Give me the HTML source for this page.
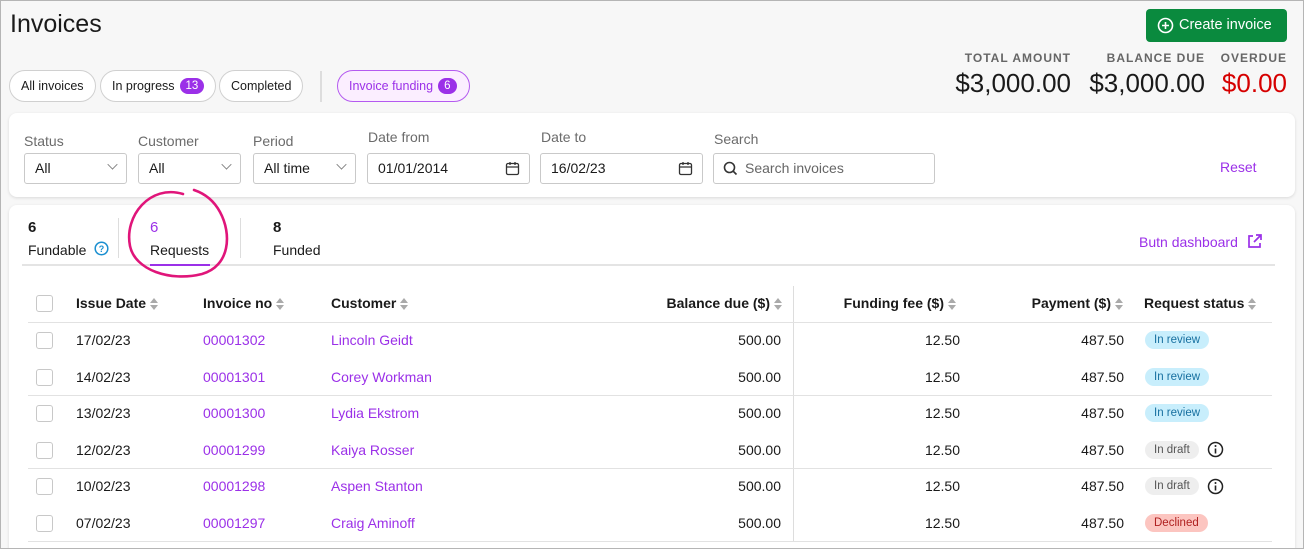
<!DOCTYPE html>
<html><head><meta charset="utf-8"><style>
*{box-sizing:border-box;margin:0;padding:0}
html{width:1304px;height:549px;overflow:hidden}
body{width:1304px;height:549px;overflow:hidden;background:#f7f7f7;font-family:"Liberation Sans",sans-serif;color:#1a1a1a;position:relative}
.frame{position:absolute;left:0;top:0;width:1304px;height:549px;border:1px solid #b5b5b5;pointer-events:none;z-index:9}
.a{position:absolute;white-space:nowrap}
.pill{position:absolute;top:70px;height:32px;border:1px solid #d0d0d0;border-radius:16px;background:#fff;font-size:12.5px;line-height:30px;padding:0 11px}
.badge{display:inline-block;background:#9b30e8;color:#fff;border-radius:9px;font-size:11.5px;line-height:16px;padding:0 6px;margin-left:5px;vertical-align:1px}
.card{position:absolute;left:9px;width:1286px;background:#fff;border-radius:8px;box-shadow:0 1px 3px rgba(0,0,0,.12)}
.lbl{font-size:14px;color:#6b6b6b}
.sel{position:absolute;top:153px;height:31px;border:1px solid #c9c9c9;border-radius:3px;background:#fff;font-size:14px;line-height:29px;padding-left:10px}
.chev{position:absolute;right:9px;width:9px;height:9px;border-right:1.5px solid #777;border-bottom:1.5px solid #777;transform:rotate(45deg) scale(.8);top:6px}
.th{font-weight:bold;font-size:14px;top:295px}
.sort{display:inline-block;width:8px;vertical-align:-2px;margin-left:4px}
.cb{position:absolute;left:36px;width:17px;height:17px;border:1px solid #c8c8c8;border-radius:3px;background:#fff}
.pur{color:#9b30e8}
.td{font-size:14px}
.st{position:absolute;left:1145px;height:18px;border-radius:9px;font-size:11.5px;line-height:18px;padding:0 9px}
.rev{background:#c8eefc;color:#1770a0}
.dr{background:#eee;color:#555}
.de{background:#fcc5c0;color:#b02020}
.hr{position:absolute;left:28px;width:1244px;height:1px;background:#e2e2e2}
</style></head><body>
<div class="frame"></div>
<div class="a" style="left:10px;top:10px;font-size:25px">Invoices</div>
<div class="a" style="left:1146px;top:9px;width:141px;height:33px;background:#0a8a3e;border-radius:4px;color:#fff;font-size:14.5px;line-height:33px;padding-left:33px">Create invoice
<svg style="position:absolute;left:11px;top:8px" width="17" height="17" viewBox="0 0 17 17"><circle cx="8.5" cy="8.5" r="7" fill="none" stroke="#fff" stroke-width="1.6"/><path d="M8.5 5v7M5 8.5h7" stroke="#fff" stroke-width="1.6"/></svg></div>
<div class="a" style="right:233px;top:51px;font-size:12px;letter-spacing:1px;color:#666;font-weight:bold">TOTAL AMOUNT</div>
<div class="a" style="right:99px;top:51px;font-size:12px;letter-spacing:1px;color:#666;font-weight:bold">BALANCE DUE</div>
<div class="a" style="right:17px;top:51px;font-size:12px;letter-spacing:1px;color:#666;font-weight:bold">OVERDUE</div>
<div class="a" style="right:233px;top:68px;font-size:26px">$3,000.00</div>
<div class="a" style="right:99px;top:68px;font-size:26px">$3,000.00</div>
<div class="a" style="right:17px;top:68px;font-size:26px;color:#d60000">$0.00</div>
<div class="pill" style="left:9px">All invoices</div>
<div class="pill" style="left:100px">In progress<span class="badge">13</span></div>
<div class="pill" style="left:219px">Completed</div>
<div class="a" style="left:320px;top:71px;width:2px;height:31px;background:#ddd"></div>
<div class="pill" style="left:337px;width:133px;background:#fbeeff;border-color:#b45af0;color:#9b30e8">Invoice funding<span class="badge">6</span></div>

<div class="card" style="top:113px;height:84px"></div>
<div class="a lbl" style="left:24px;top:133px">Status</div>
<div class="a lbl" style="left:138px;top:133px">Customer</div>
<div class="a lbl" style="left:253px;top:133px">Period</div>
<div class="a lbl" style="left:368px;top:129px">Date from</div>
<div class="a lbl" style="left:541px;top:129px">Date to</div>
<div class="a lbl" style="left:714px;top:131px">Search</div>
<div class="sel" style="left:24px;width:103px">All<i class="chev"></i></div>
<div class="sel" style="left:138px;width:103px">All<i class="chev"></i></div>
<div class="sel" style="left:253px;width:103px">All time<i class="chev"></i></div>
<div class="sel" style="left:367px;width:163px">01/01/2014<svg style="position:absolute;right:9px;top:7px" width="15" height="15" viewBox="0 0 15 15"><rect x="1.5" y="2.5" width="12" height="11" rx="1.5" fill="none" stroke="#333" stroke-width="1.3"/><path d="M1.5 6h12M5 1v3M10 1v3" stroke="#333" stroke-width="1.3"/></svg></div>
<div class="sel" style="left:540px;width:163px">16/02/23<svg style="position:absolute;right:9px;top:7px" width="15" height="15" viewBox="0 0 15 15"><rect x="1.5" y="2.5" width="12" height="11" rx="1.5" fill="none" stroke="#333" stroke-width="1.3"/><path d="M1.5 6h12M5 1v3M10 1v3" stroke="#333" stroke-width="1.3"/></svg></div>
<div class="sel" style="left:713px;width:222px;padding-left:31px;color:#666">Search invoices<svg style="position:absolute;left:9px;top:7px" width="15" height="15" viewBox="0 0 15 15"><circle cx="6.5" cy="6.5" r="5" fill="none" stroke="#333" stroke-width="1.6"/><path d="M10 10l3.5 3.5" stroke="#333" stroke-width="1.6"/></svg></div>
<div class="a pur" style="left:1220px;top:159px;font-size:14px">Reset</div>

<div class="card" style="top:205px;height:350px"></div>
<div class="a" style="left:28px;top:219px;font-size:15px;font-weight:bold">6</div>
<div class="a" style="left:28px;top:242px;font-size:14px">Fundable</div>
<svg class="a" style="left:94px;top:241px" width="15" height="15" viewBox="0 0 15 15"><circle cx="7.5" cy="7.5" r="6.3" fill="none" stroke="#1a8fd0" stroke-width="1.5"/><text x="7.5" y="11" font-size="9" font-weight="bold" text-anchor="middle" fill="#1a8fd0" font-family="Liberation Sans">?</text></svg>
<div class="a" style="left:118px;top:218px;width:1px;height:40px;background:#ddd"></div>
<div class="a pur" style="left:150px;top:219px;font-size:15px">6</div>
<div class="a" style="left:150px;top:242px;font-size:14px">Requests</div>
<div class="a" style="left:240px;top:218px;width:1px;height:40px;background:#ddd"></div>
<div class="a" style="left:273px;top:219px;font-size:15px;font-weight:bold">8</div>
<div class="a" style="left:273px;top:242px;font-size:14px">Funded</div>
<div class="a" style="left:22px;top:264px;width:1253px;height:2px;background:#e4e4e4"></div>
<div class="a" style="left:150px;top:264px;width:60px;height:2px;background:#9b30e8"></div>
<svg class="a" style="left:120px;top:188px" width="120" height="92" viewBox="0 0 120 92"><path d="M63 6C30-4 4 28 10 58c5 24 40 36 72 28 28-8 30-40 18-62-7-13-17-19-26-22" fill="none" stroke="#e0157a" stroke-width="2.6" stroke-linecap="round"/></svg>
<div class="a pur" style="left:1139px;top:234px;font-size:14px">Butn dashboard</div>
<svg class="a" style="left:1246px;top:233px" width="17" height="17" viewBox="0 0 17 17"><path d="M7 3H3v11h11v-4M10 2h5v5M15 2L8 9" fill="none" stroke="#9b30e8" stroke-width="1.7"/></svg>

<div class="a" style="left:793px;top:286px;width:1px;height:256px;background:#ddd"></div>
<div class="cb" style="top:295px"></div>
<div class="a th" style="left:76px">Issue Date<svg class="sort" viewBox="0 0 8 12" height="12"><path d="M4 0l4 5H0zM4 12l4-5H0z" fill="#aaa"/></svg></div>
<div class="a th" style="left:203px">Invoice no<svg class="sort" viewBox="0 0 8 12" height="12"><path d="M4 0l4 5H0zM4 12l4-5H0z" fill="#aaa"/></svg></div>
<div class="a th" style="left:331px">Customer<svg class="sort" viewBox="0 0 8 12" height="12"><path d="M4 0l4 5H0zM4 12l4-5H0z" fill="#aaa"/></svg></div>
<div class="a th" style="right:522px">Balance due ($)<svg class="sort" viewBox="0 0 8 12" height="12"><path d="M4 0l4 5H0zM4 12l4-5H0z" fill="#aaa"/></svg></div>
<div class="a th" style="right:348px">Funding fee ($)<svg class="sort" viewBox="0 0 8 12" height="12"><path d="M4 0l4 5H0zM4 12l4-5H0z" fill="#aaa"/></svg></div>
<div class="a th" style="right:181px">Payment ($)<svg class="sort" viewBox="0 0 8 12" height="12"><path d="M4 0l4 5H0zM4 12l4-5H0z" fill="#aaa"/></svg></div>
<div class="a th" style="left:1144px">Request status<svg class="sort" viewBox="0 0 8 12" height="12"><path d="M4 0l4 5H0zM4 12l4-5H0z" fill="#aaa"/></svg></div>
<div class="hr" style="top:322px"></div>
<div class="hr" style="top:395px"></div>
<div class="hr" style="top:468px"></div>
<div class="hr" style="top:541px"></div>

<div class="cb" style="top:332px"></div><div class="a td" style="left:76px;top:332px">17/02/23</div><div class="a td pur" style="left:203px;top:332px">00001302</div><div class="a td pur" style="left:331px;top:332px">Lincoln Geidt</div><div class="a td" style="right:523px;top:332px">500.00</div><div class="a td" style="right:344px;top:332px">12.50</div><div class="a td" style="right:180px;top:332px">487.50</div><div class="st rev" style="top:331px">In review</div>
<div class="cb" style="top:369px"></div><div class="a td" style="left:76px;top:369px">14/02/23</div><div class="a td pur" style="left:203px;top:369px">00001301</div><div class="a td pur" style="left:331px;top:369px">Corey Workman</div><div class="a td" style="right:523px;top:369px">500.00</div><div class="a td" style="right:344px;top:369px">12.50</div><div class="a td" style="right:180px;top:369px">487.50</div><div class="st rev" style="top:368px">In review</div>
<div class="cb" style="top:405px"></div><div class="a td" style="left:76px;top:405px">13/02/23</div><div class="a td pur" style="left:203px;top:405px">00001300</div><div class="a td pur" style="left:331px;top:405px">Lydia Ekstrom</div><div class="a td" style="right:523px;top:405px">500.00</div><div class="a td" style="right:344px;top:405px">12.50</div><div class="a td" style="right:180px;top:405px">487.50</div><div class="st rev" style="top:404px">In review</div>
<div class="cb" style="top:442px"></div><div class="a td" style="left:76px;top:442px">12/02/23</div><div class="a td pur" style="left:203px;top:442px">00001299</div><div class="a td pur" style="left:331px;top:442px">Kaiya Rosser</div><div class="a td" style="right:523px;top:442px">500.00</div><div class="a td" style="right:344px;top:442px">12.50</div><div class="a td" style="right:180px;top:442px">487.50</div><div class="st dr" style="top:441px">In draft</div>
<svg class="a" style="left:1207px;top:441px" width="17" height="17" viewBox="0 0 17 17"><circle cx="8.5" cy="8.5" r="7" fill="none" stroke="#222" stroke-width="1.5"/><path d="M8.5 7.5v5" stroke="#222" stroke-width="1.6"/><circle cx="8.5" cy="5" r="1" fill="#222"/></svg>
<div class="cb" style="top:478px"></div><div class="a td" style="left:76px;top:478px">10/02/23</div><div class="a td pur" style="left:203px;top:478px">00001298</div><div class="a td pur" style="left:331px;top:478px">Aspen Stanton</div><div class="a td" style="right:523px;top:478px">500.00</div><div class="a td" style="right:344px;top:478px">12.50</div><div class="a td" style="right:180px;top:478px">487.50</div><div class="st dr" style="top:477px">In draft</div>
<svg class="a" style="left:1207px;top:478px" width="17" height="17" viewBox="0 0 17 17"><circle cx="8.5" cy="8.5" r="7" fill="none" stroke="#222" stroke-width="1.5"/><path d="M8.5 7.5v5" stroke="#222" stroke-width="1.6"/><circle cx="8.5" cy="5" r="1" fill="#222"/></svg>
<div class="cb" style="top:515px"></div><div class="a td" style="left:76px;top:515px">07/02/23</div><div class="a td pur" style="left:203px;top:515px">00001297</div><div class="a td pur" style="left:331px;top:515px">Craig Aminoff</div><div class="a td" style="right:523px;top:515px">500.00</div><div class="a td" style="right:344px;top:515px">12.50</div><div class="a td" style="right:180px;top:515px">487.50</div><div class="st de" style="top:514px">Declined</div>
</body></html>
